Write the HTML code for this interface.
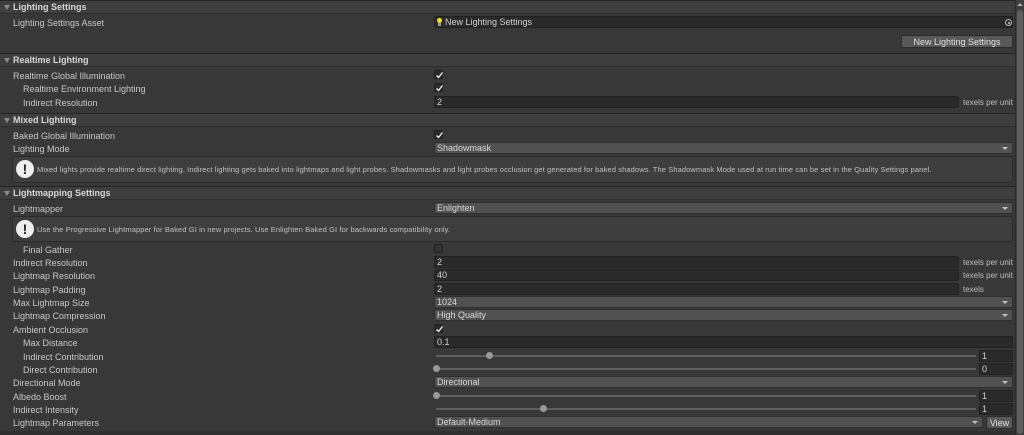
<!DOCTYPE html>
<html><head><meta charset="utf-8"><style>
*{margin:0;padding:0;box-sizing:border-box}
body{width:1024px;height:435px;overflow:hidden;background:#383838;font-family:"Liberation Sans",sans-serif;font-size:9px;color:#c8c8c8;position:relative}
div,span{position:absolute}
.h{left:0;width:1015px;height:14px;background:#3e3e3e;border-top:1px solid #242424;border-bottom:1px solid #2e2e2e;font-weight:bold;color:#d6d6d6;padding-left:13px;line-height:13px}
.h:before{content:"";position:absolute;left:4px;top:4px;border-left:3px solid transparent;border-right:3px solid transparent;border-top:5px solid #8a8a8a}
.l{left:13px;line-height:14px;height:12px}
.i{left:23px}
.f{left:434px;height:12px;background:#2a2a2a;border:1px solid #212121;border-radius:2px;padding-left:2px;line-height:11px;color:#d2d2d2}
.d{left:434px;width:579px;height:12px;background:#515151;border:1px solid #2f2f2f;border-radius:2px;padding-left:2px;line-height:11px;color:#dadada}
.d:after{content:"";position:absolute;right:4px;top:4px;border-left:3px solid transparent;border-right:3px solid transparent;border-top:3px solid #c4c4c4}
.u{left:963px;line-height:13px;font-size:8px;color:#bdbdbd}
.c{left:434px;width:9px;height:9px;background:#2a2a2a;border:1px solid #202020;border-radius:2px}
.c svg{position:absolute;left:0;top:0}
.tr{left:436px;width:540px;height:2px;background:#5e5e5e}
.k{width:7px;height:7px;border-radius:50%;background:#999}
.n{left:979px;width:34px;height:12px;background:#2a2a2a;border:1px solid #212121;border-radius:2px;padding-left:2px;line-height:11px;color:#d2d2d2}
.hb{left:12px;width:1001px;background:#3e3e3e;border:1px solid #2a2a2a;border-radius:3px;font-size:7.5px;letter-spacing:0.1px;color:#c0c0c0;padding-left:24px}
.hb .ic{left:3px;top:3px;width:18px;height:18px;border-radius:50%;background:#eee;color:#222;font-weight:bold;font-size:14px;text-align:center;line-height:18px;letter-spacing:0}
</style></head><body>
<div style="left:1015px;top:0;width:9px;height:435px;background:#3e3e3e;border-left:1px solid #2a2a2a"></div>
<div style="left:1017px;top:10px;width:6px;height:424px;background:#5f5f5f;border-radius:3px"></div>
<div style="left:1017px;top:3px;border-left:3px solid transparent;border-right:3px solid transparent;border-bottom:3px solid #aaa"></div>

<div class="h" style="top:0">Lighting Settings</div>
<div class="l" style="top:16px">Lighting Settings Asset</div>
<div class="f" style="top:16px;width:579px;padding-left:10px">New Lighting Settings<span style="left:2px;top:1px;width:5px;height:5px;border-radius:50%;background:#f4e230"></span><span style="left:3px;top:6px;width:3px;height:3px;background:#999"></span><span style="left:570px;top:2px;width:7px;height:7px;border:1px solid #bbb;border-radius:50%"></span><span style="left:572.5px;top:4.5px;width:2px;height:2px;background:#ccc;border-radius:50%"></span></div>
<div style="left:901px;top:35px;width:112px;height:13px;background:#585858;border:1px solid #2c2c2c;border-radius:2px;text-align:center;line-height:12px;color:#e0e0e0">New Lighting Settings</div>

<div class="h" style="top:53px">Realtime Lighting</div>
<div class="l" style="top:69px">Realtime Global Illumination</div>
<div class="c" style="top:70px"><svg width="9" height="9"><path d="M1.5 4.5L3.5 6.5L7.5 1.5" stroke="#eee" stroke-width="1.4" fill="none"/></svg></div>
<div class="l i" style="top:82px">Realtime Environment Lighting</div>
<div class="c" style="top:83px"><svg width="9" height="9"><path d="M1.5 4.5L3.5 6.5L7.5 1.5" stroke="#eee" stroke-width="1.4" fill="none"/></svg></div>
<div class="l i" style="top:96px">Indirect Resolution</div>
<div class="f" style="top:96px;width:525px">2</div><div class="u" style="top:96px">texels per unit</div>

<div class="h" style="top:113px">Mixed Lighting</div>
<div class="l" style="top:129px">Baked Global Illumination</div>
<div class="c" style="top:130px"><svg width="9" height="9"><path d="M1.5 4.5L3.5 6.5L7.5 1.5" stroke="#eee" stroke-width="1.4" fill="none"/></svg></div>
<div class="l" style="top:142px">Lighting Mode</div>
<div class="d" style="top:142px">Shadowmask</div>
<div class="hb" style="top:156px;height:27px;line-height:26px"><span class="ic">!</span>Mixed lights provide realtime direct lighting. Indirect lighting gets baked into lightmaps and light probes. Shadowmasks and light probes occlusion get generated for baked shadows. The Shadowmask Mode used at run time can be set in the Quality Settings panel.</div>

<div class="h" style="top:186px">Lightmapping Settings</div>
<div class="l" style="top:202px">Lightmapper</div>
<div class="d" style="top:202px">Enlighten</div>
<div class="hb" style="top:216px;height:26px;line-height:25px"><span class="ic">!</span>Use the Progressive Lightmapper for Baked GI in new projects. Use Enlighten Baked GI for backwards compatibility only.</div>
<div class="l i" style="top:243px">Final Gather</div>
<div class="c" style="top:244px;background:#333"></div>
<div class="l" style="top:256px">Indirect Resolution</div>
<div class="f" style="top:256px;width:525px">2</div><div class="u" style="top:256px">texels per unit</div>
<div class="l" style="top:269px">Lightmap Resolution</div>
<div class="f" style="top:269px;width:525px">40</div><div class="u" style="top:269px">texels per unit</div>
<div class="l" style="top:283px">Lightmap Padding</div>
<div class="f" style="top:283px;width:525px">2</div><div class="u" style="top:283px">texels</div>
<div class="l" style="top:296px">Max Lightmap Size</div>
<div class="d" style="top:296px">1024</div>
<div class="l" style="top:309px">Lightmap Compression</div>
<div class="d" style="top:309px">High Quality</div>
<div class="l" style="top:323px">Ambient Occlusion</div>
<div class="c" style="top:324px"><svg width="9" height="9"><path d="M1.5 4.5L3.5 6.5L7.5 1.5" stroke="#eee" stroke-width="1.4" fill="none"/></svg></div>
<div class="l i" style="top:336px">Max Distance</div>
<div class="f" style="top:336px;width:579px">0.1</div>
<div class="l i" style="top:350px">Indirect Contribution</div>
<div class="tr" style="top:355px"></div><div class="k" style="left:486px;top:352px"></div><div class="n" style="top:350px">1</div>
<div class="l i" style="top:363px">Direct Contribution</div>
<div class="tr" style="top:368px"></div><div class="k" style="left:433px;top:365px"></div><div class="n" style="top:363px">0</div>
<div class="l" style="top:376px">Directional Mode</div>
<div class="d" style="top:376px">Directional</div>
<div class="l" style="top:390px">Albedo Boost</div>
<div class="tr" style="top:395px"></div><div class="k" style="left:433px;top:392px"></div><div class="n" style="top:390px">1</div>
<div class="l" style="top:403px">Indirect Intensity</div>
<div class="tr" style="top:408px"></div><div class="k" style="left:540px;top:405px"></div><div class="n" style="top:403px">1</div>
<div class="l" style="top:416px">Lightmap Parameters</div>
<div class="d" style="top:416px;width:549px">Default-Medium</div>
<div style="left:986px;top:416px;width:27px;height:13px;background:#585858;border:1px solid #2c2c2c;border-radius:2px;text-align:center;line-height:12px;color:#e0e0e0">View</div>
<div style="left:0;top:431px;width:1015px;height:4px;background:#2f2f2f"></div>
</body></html>
